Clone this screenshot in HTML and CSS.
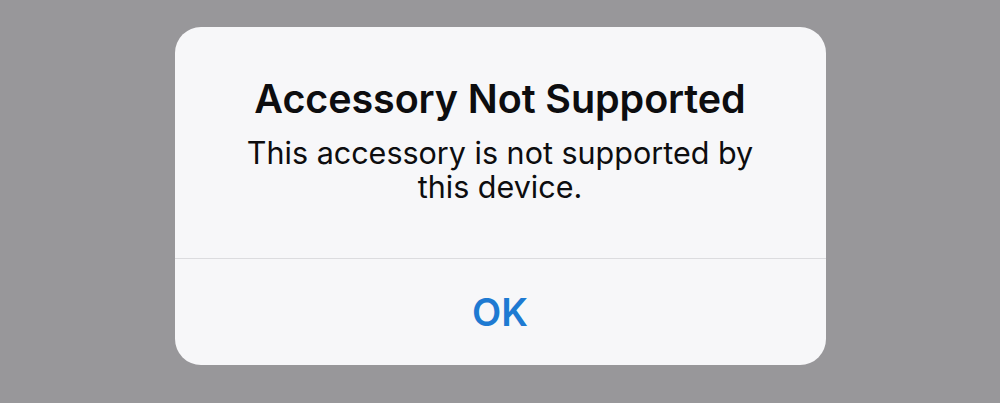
FILE: index.html
```html
<!DOCTYPE html>
<html lang="en">
<head>
  <meta charset="UTF-8" />
  <title>Accessory Not Supported</title>
  <link rel="stylesheet" href="styles.css">
</head>
<body>
  <div class="alert">
    <div class="alert-body">
      <h1 class="alert-title">Accessory Not Supported</h1>
      <p class="alert-message">This accessory is not supported by<br>this device.</p>
    </div>
    <button class="alert-button" type="button">OK</button>
  </div>
</body>
</html>
```

FILE: styles.css
```css
:root {
  --bg: #98979a;
  --sheet: #f7f7f9;
  --text: #0d0d0f;
  --divider: #dcdcdf;
  --accent: #1e7ad2;
}

html, body {
  height: 100%;
}

body {
  margin: 0;
  background: var(--bg);
  font-family: 'Inter', 'Liberation Sans', sans-serif;
  color: var(--text);
  display: flex;
  justify-content: center;
  padding-top: 27px;
  box-sizing: border-box;
}

.alert {
  width: 651px;
  height: 338px;
  background: var(--sheet);
  border-radius: 26px;
  display: flex;
  flex-direction: column;
  overflow: hidden;
}

.alert-body {
  height: 232px;
  box-sizing: border-box;
  padding-top: 49px;
  border-bottom: 1px solid var(--divider);
  text-align: center;
}

.alert-title {
  margin: 0;
  font-size: 39.5px;
  font-weight: 600;
  line-height: 46px;
  letter-spacing: -0.1px;
}

.alert-message {
  margin: 14px 0 0;
  font-size: 30.5px;
  line-height: 34px;
}

.alert-button {
  flex: 1;
  border: none;
  background: none;
  font-family: inherit;
  font-size: 38px;
  font-weight: 600;
  color: var(--accent);
  cursor: pointer;
}
```
